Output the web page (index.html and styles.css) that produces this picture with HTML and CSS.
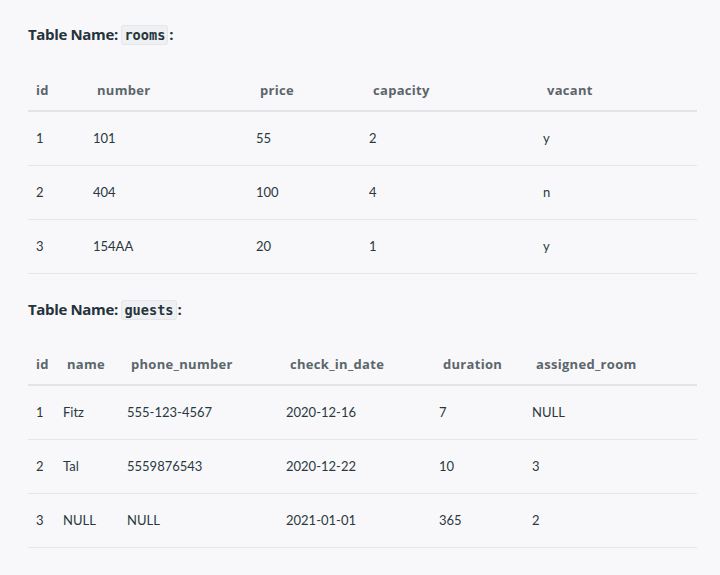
FILE: index.html
```html
<!DOCTYPE html>
<html>
<head>
<meta charset="utf-8">
<link rel="stylesheet" href="styles.css">
</head>
<body>
<div class="page">
  <p class="title">Table Name: <code>rooms</code>:</p>
  <table class="tbl rooms">
    <colgroup><col class="r1"><col class="r2"><col class="r3"><col class="r4"><col class="r5"></colgroup>
    <thead><tr><th class="first">id</th><th>number</th><th>price</th><th>capacity</th><th>vacant</th></tr></thead>
    <tbody>
      <tr><td>1</td><td>101</td><td>55</td><td>2</td><td>y</td></tr>
      <tr><td>2</td><td>404</td><td>100</td><td>4</td><td>n</td></tr>
      <tr><td>3</td><td>154AA</td><td>20</td><td>1</td><td>y</td></tr>
    </tbody>
  </table>
  <p class="title second">Table Name: <code>guests</code>:</p>
  <table class="tbl guests">
    <colgroup><col class="g1"><col class="g2"><col class="g3"><col class="g4"><col class="g5"><col class="g6"></colgroup>
    <thead><tr><th class="first">id</th><th>name</th><th>phone_number</th><th>check_in_date</th><th>duration</th><th>assigned_room</th></tr></thead>
    <tbody>
      <tr><td>1</td><td>Fitz</td><td>555-123-4567</td><td>2020-12-16</td><td>7</td><td>NULL</td></tr>
      <tr><td>2</td><td>Tal</td><td>5559876543</td><td>2020-12-22</td><td>10</td><td>3</td></tr>
      <tr><td>3</td><td>NULL</td><td>NULL</td><td>2021-01-01</td><td>365</td><td>2</td></tr>
    </tbody>
  </table>
</div>
</body>
</html>
```
FILE: styles.css
```css
html, body {
  margin: 0;
  padding: 0;
  background: #f8f8fa;
}
body {
  font-family: "Lato", "Open Sans", sans-serif;
  color: #27353a;
}
.page {
  padding: 23px 23px 0 28px;
}
.title {
  margin: 0 0 24px 0;
  font-family: "Open Sans", "Lato", sans-serif;
  font-size: 15px;
  line-height: 22px;
  font-weight: 700;
  letter-spacing: -0.35px;
  color: #25323a;
}
.title.second {
  margin-top: 24px;
  margin-bottom: 23px;
}
.title code {
  font-family: "DejaVu Sans Mono", "Liberation Mono", monospace;
  font-size: 13.6px;
  font-weight: 700;
  letter-spacing: 0;
  background: #eef0f3;
  border: 1px solid #e3e6ea;
  border-radius: 3px;
  padding: 1px 2px;
  margin-right: 1px;
  color: #27353a;
}
.tbl {
  width: 669px;
  border-collapse: collapse;
  table-layout: fixed;
  font-size: 13px;
  line-height: 17px;
}
.tbl th {
  text-align: left;
  font-family: "Open Sans", "Lato", sans-serif;
  font-weight: 700;
  letter-spacing: 0.3px;
  color: #5b666b;
  padding: 12px 8px 11px 12px;
  border-bottom: 2px solid #e1e4e8;
}
.tbl th.first {
  padding-left: 8px;
}
.tbl td {
  padding: 18px 8px;
  border-bottom: 1px solid #e3e5e8;
  color: #2a383d;
}
.r1 { width: 57px; }
.r2 { width: 163px; }
.r3 { width: 113px; }
.r4 { width: 174px; }
.r5 { width: 162px; }
.g1 { width: 27px; }
.g2 { width: 64px; }
.g3 { width: 159px; }
.g4 { width: 153px; }
.g5 { width: 93px; }
.g6 { width: 173px; }
```
